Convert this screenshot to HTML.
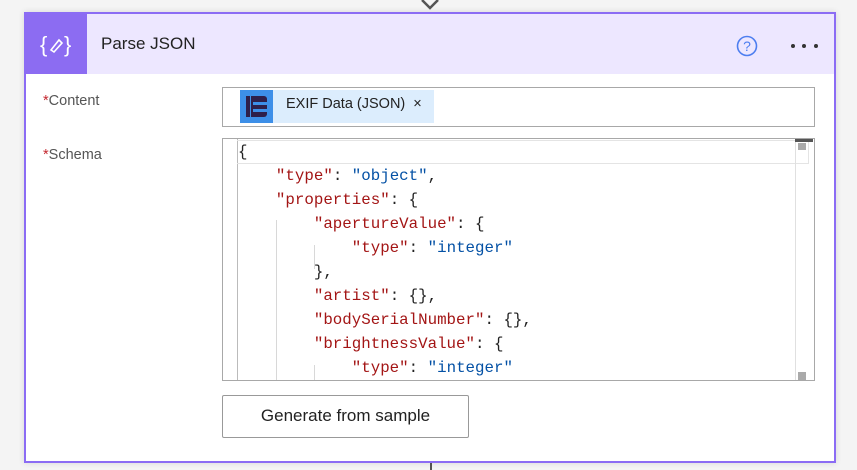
<!DOCTYPE html>
<html><head><style>
*{margin:0;padding:0;box-sizing:border-box}
body{width:857px;height:470px;background:#f4f4f4;position:relative;overflow:hidden;font-family:"Segoe UI","Liberation Sans",sans-serif}
.card{position:absolute;left:24px;top:12px;width:812px;height:451px;border:2px solid #8b6cf4;background:#fff;box-shadow:0 0 6px rgba(0,0,0,.12)}
.hdr{position:absolute;left:0;top:0;width:808px;height:60px;background:#ede7ff}
.ic{position:absolute;left:0;top:0;width:61px;height:60px;background:#8c6cf2}
.title{position:absolute;left:75px;top:20px;font-size:17px;color:#222}
.lbl{position:absolute;left:17px;font-size:14.5px;color:#555}
.lbl b{color:#c4262e;font-weight:normal}
.box{position:absolute;left:196px;width:593px;border:1.5px solid #a8a8a8;background:#fff}
.code{position:absolute;font-family:"Liberation Mono",monospace;font-size:15.8px;white-space:pre;color:#222}
.k{color:#a31515}.v{color:#0451a5}
.g{position:absolute;width:1px;background:#d8d8d8}
.btn{position:absolute;left:196px;top:381px;width:247px;height:43px;border:1.5px solid #999;border-radius:2px;font-size:17px;color:#222;text-align:center;line-height:40px;background:#fff}
</style></head><body>
<svg style="position:absolute;left:418px;top:0" width="24" height="12"><path d="M4 0 L12 8 L20 0" stroke="#555" stroke-width="2.5" fill="none"/></svg>
<div style="position:absolute;left:430px;top:462px;width:2px;height:8px;background:#555"></div>
<div class="card">
 <div class="hdr">
  <div class="ic"><svg width="61" height="60"><text x="14" y="38" fill="#fff" font-size="22" font-family="Liberation Sans">{</text><text x="38" y="38" fill="#fff" font-size="22" font-family="Liberation Sans">}</text><path d="M25 36 L33 26 L36 29 L28 38 Z" fill="none" stroke="#fff" stroke-width="1.6"/></svg></div>
  <div class="title">Parse JSON</div>
  <svg style="position:absolute;left:709px;top:20px" width="24" height="24"><circle cx="12" cy="12" r="9.5" fill="none" stroke="#4d7ef0" stroke-width="1.6"/><text x="12" y="17" text-anchor="middle" fill="#4d7ef0" font-size="14" font-family="Liberation Sans">?</text></svg>
  <div style="position:absolute;left:765px;top:30px;width:4px;height:4px;border-radius:2px;background:#333"></div>
  <div style="position:absolute;left:776px;top:30px;width:4px;height:4px;border-radius:2px;background:#333"></div>
  <div style="position:absolute;left:788px;top:30px;width:4px;height:4px;border-radius:2px;background:#333"></div>
 </div>
 <div class="lbl" style="top:79px"><b>*</b>Content</div>
 <div class="lbl" style="top:133px"><b>*</b>Schema</div>
 <div class="box" style="top:73px;height:40px">
  <div style="position:absolute;left:17px;top:2px;width:194px;height:33px;background:#dcedfd">
   <div style="position:absolute;left:0;top:0;width:33px;height:33px;background:#3d8fe8">
    <div style="position:absolute;left:6px;top:6px;width:4px;height:21px;background:#2e1f4a"></div>
    <div style="position:absolute;left:11px;top:6px;width:16px;height:21px;background:#2e1f4a;border-radius:0 3px 3px 0"></div>
    <div style="position:absolute;left:13px;top:12px;width:14px;height:3px;background:#3d8fe8"></div>
    <div style="position:absolute;left:13px;top:19px;width:14px;height:3px;background:#3d8fe8"></div>
   </div>
   <div style="position:absolute;left:46px;top:6px;font-size:14.5px;color:#222">EXIF Data (JSON)&nbsp; ×</div>
  </div>
 </div>
 <div class="box" style="top:124px;height:243px;overflow:hidden">
  <div style="position:absolute;left:14px;top:0;width:1px;height:243px;background:#bbb"></div>
  <div style="position:absolute;left:14px;top:1px;width:572px;height:24px;border:1.5px solid #e4e4e4;border-left:none"></div>
  <div style="position:absolute;left:572px;top:0;width:1px;height:243px;background:#e0e0e0"></div>
  <div style="position:absolute;left:572px;top:0;width:18px;height:3px;background:#555"></div>
  <div style="position:absolute;left:575px;top:4px;width:8px;height:7px;background:#aaa"></div>
  <div style="position:absolute;left:575px;top:233px;width:8px;height:9px;background:#aaa"></div>
  <div class="g" style="left:53px;top:81px;height:160px"></div>
  <div class="g" style="left:91px;top:106px;height:24px"></div>
  <div class="g" style="left:91px;top:226px;height:20px"></div>
  <div class="code" style="left:15px;top:1px;line-height:24px">{
    <span class="k">"type"</span>: <span class="v">"object"</span>,
    <span class="k">"properties"</span>: {
        <span class="k">"apertureValue"</span>: {
            <span class="k">"type"</span>: <span class="v">"integer"</span>
        },
        <span class="k">"artist"</span>: {},
        <span class="k">"bodySerialNumber"</span>: {},
        <span class="k">"brightnessValue"</span>: {
            <span class="k">"type"</span>: <span class="v">"integer"</span></div>
 </div>
 <div class="btn">Generate from sample</div>
</div>
</body></html>
